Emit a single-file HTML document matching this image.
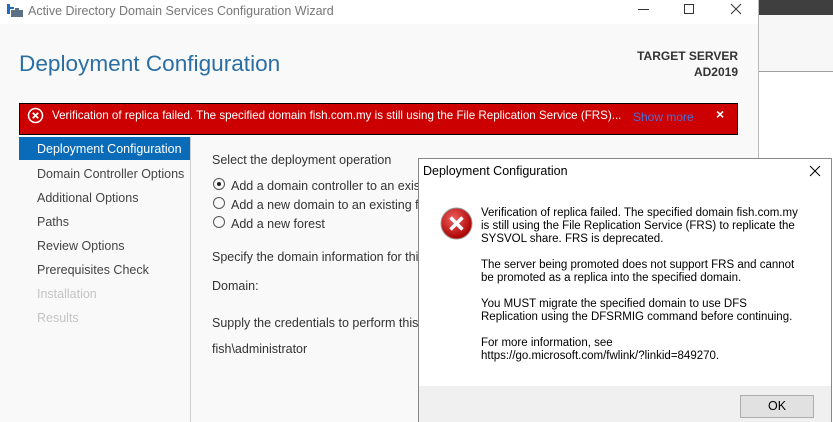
<!DOCTYPE html>
<html><head><style>
*{margin:0;padding:0;box-sizing:border-box}
body{width:833px;height:422px;overflow:hidden;font-family:"Liberation Sans",sans-serif;background:#fff;position:relative}
.a{position:absolute;white-space:nowrap}
</style></head><body>
<div class="a" style="left:758px;top:0;width:75px;height:15px;background:#3f3f3f"></div>
<div class="a" style="left:758px;top:15px;width:75px;height:57px;background:#f7f7f7;border-bottom:1px solid #a0a0a0"></div>
<div class="a" style="left:758px;top:0;width:1px;height:160px;background:#bbb"></div>
<div class="a" style="left:0;top:0;width:758px;height:24px;background:#fff"></div>
<svg class="a" style="left:7px;top:4px" width="16" height="14"><rect x="0" y="0" width="3" height="10" fill="#1b6ec2"/><rect x="3" y="3" width="4" height="2" fill="#1b6ec2"/><rect x="4" y="6" width="12" height="7" fill="#5b6f85"/><rect x="8" y="4" width="4" height="2" fill="#5b6f85"/></svg>
<div class="a" style="left:28px;top:4px;font-size:12.5px;color:#777">Active Directory Domain Services Configuration Wizard</div>
<div class="a" style="left:638px;top:9px;width:11px;height:1px;background:#333"></div>
<div class="a" style="left:684px;top:4px;width:10px;height:10px;border:1px solid #333"></div>
<svg class="a" style="left:730px;top:3px" width="12" height="12"><path d="M1 1L11 11M11 1L1 11" stroke="#333" stroke-width="1"/></svg>
<div class="a" style="left:0;top:24px;width:758px;height:398px;background:#f9f9f9"></div>
<div class="a" style="left:19px;top:51px;font-size:22.6px;color:#2a6fa3">Deployment Configuration</div>
<div class="a" style="left:600px;top:48px;width:138px;text-align:right;font-size:12px;font-weight:bold;color:#333;line-height:16px">TARGET SERVER<br>AD2019</div>
<div class="a" style="left:19px;top:103px;width:719px;height:32px;background:#cc0000;border:1px solid #000"></div>
<svg class="a" style="left:27px;top:107px" width="17" height="17"><circle cx="8.5" cy="8.5" r="7" fill="none" stroke="#fff" stroke-width="1.5"/><path d="M5.8 5.8L11.2 11.2M11.2 5.8L5.8 11.2" stroke="#fff" stroke-width="1.8"/></svg>
<div class="a" style="left:52px;top:109px;font-size:11.6px;color:#fff">Verification of replica failed. The specified domain fish.com.my is still using the File Replication Service (FRS)...</div>
<div class="a" style="left:633px;top:110px;font-size:12px;color:#4a6fd8">Show more</div>
<div class="a" style="left:716px;top:106px;font-size:14px;font-weight:bold;color:#fff">×</div>
<div class="a" style="left:19px;top:137px;width:171px;height:23px;background:#0a6cb8"></div>
<div class="a" style="left:190px;top:137px;width:1px;height:285px;background:#ccc"></div>
<div class="a" style="left:37px;top:142px;font-size:12.5px;color:#fff">Deployment Configuration</div>
<div class="a" style="left:37px;top:162px;font-size:12.5px;color:#444;line-height:24px">Domain Controller Options<br>Additional Options<br>Paths<br>Review Options<br>Prerequisites Check<br><span style="color:#c4c4c4">Installation</span><br><span style="color:#c4c4c4">Results</span></div>
<div class="a" style="left:212px;top:153px;font-size:12.5px;color:#333">Select the deployment operation</div>
<div class="a" style="left:213px;top:178px;width:12px;height:12px;border:1px solid #555;border-radius:50%"></div>
<div class="a" style="left:217px;top:182px;width:4px;height:4px;background:#222;border-radius:50%"></div>
<div class="a" style="left:213px;top:197px;width:12px;height:12px;border:1px solid #555;border-radius:50%"></div>
<div class="a" style="left:213px;top:216px;width:12px;height:12px;border:1px solid #555;border-radius:50%"></div>
<div class="a" style="left:231px;top:177px;font-size:12.5px;color:#333;line-height:19px">Add a domain controller to an existing<br>Add a new domain to an existing fo<br>Add a new forest</div>
<div class="a" style="left:212px;top:250px;font-size:12.5px;color:#333">Specify the domain information for this</div>
<div class="a" style="left:212px;top:279px;font-size:12.5px;color:#333">Domain:</div>
<div class="a" style="left:212px;top:316px;font-size:12.5px;color:#333">Supply the credentials to perform this c</div>
<div class="a" style="left:212px;top:342px;font-size:12.5px;color:#333">fish\administrator</div>
<div class="a" style="left:418px;top:158px;width:414px;height:264px;background:#fff;border:1px solid #888"></div>
<div class="a" style="left:423px;top:164px;font-size:12.5px;color:#000">Deployment Configuration</div>
<svg class="a" style="left:809px;top:165px" width="12" height="12"><path d="M1 1L11 11M11 1L1 11" stroke="#000" stroke-width="1"/></svg>
<svg class="a" style="left:440px;top:207px" width="33" height="33"><defs><radialGradient id="g" cx="40%" cy="35%" r="65%"><stop offset="0" stop-color="#f06060"/><stop offset="1" stop-color="#a00"/></radialGradient></defs><circle cx="16.5" cy="16.5" r="15.5" fill="url(#g)" stroke="#999" stroke-width="1"/><path d="M10.5 10.5L22.5 22.5M22.5 10.5L10.5 22.5" stroke="#fff" stroke-width="3.5"/></svg>
<div class="a" style="left:481px;top:207px;font-size:11.5px;color:#000;line-height:13px">Verification of replica failed. The specified domain fish.com.my<br>is still using the File Replication Service (FRS) to replicate the<br>SYSVOL share. FRS is deprecated.<br><br>The server being promoted does not support FRS and cannot<br>be promoted as a replica into the specified domain.<br><br>You MUST migrate the specified domain to use DFS<br>Replication using the DFSRMIG command before continuing.<br><br>For more information, see<br>https://go.microsoft.com/fwlink/?linkid=849270.</div>
<div class="a" style="left:419px;top:386px;width:412px;height:36px;background:#f0f0f0"></div>
<div class="a" style="left:740px;top:395px;width:74px;height:23px;background:#e1e1e1;border:1px solid #adadad;font-size:12.5px;text-align:center;line-height:21px;color:#000">OK</div>
</body></html>
